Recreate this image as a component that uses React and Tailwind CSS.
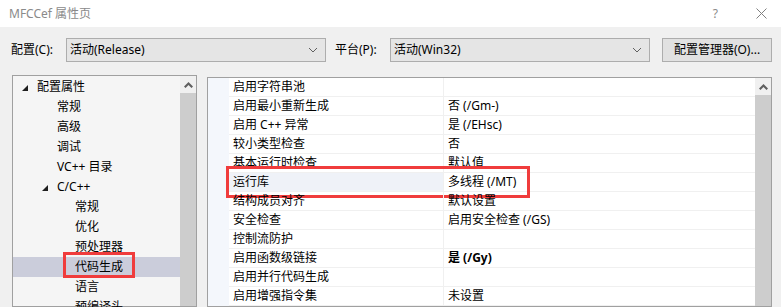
import React from "react";

const font = { fontFamily: "'Noto Sans', 'Noto Sans CJK SC', sans-serif" };

const tree = [
    { label: "配置属性", level: 0, open: true },
    { label: "常规", level: 1 },
    { label: "高级", level: 1 },
    { label: "调试", level: 1 },
    { label: "VC++ 目录", level: 1 },
    { label: "C/C++", level: 1, open: true },
    { label: "常规", level: 2 },
    { label: "优化", level: 2 },
    { label: "预处理器", level: 2 },
    { label: "代码生成", level: 2, selected: true },
    { label: "语言", level: 2 },
    { label: "预编译头", level: 2 },
];

const props = [
    ["启用字符串池", ""],
    ["启用最小重新生成", "否 (/Gm-)"],
    ["启用 C++ 异常", "是 (/EHsc)"],
    ["较小类型检查", "否"],
    ["基本运行时检查", "默认值"],
    ["运行库", "多线程 (/MT)", "hl"],
    ["结构成员对齐", "默认设置"],
    ["安全检查", "启用安全检查 (/GS)"],
    ["控制流防护", ""],
    ["启用函数级链接", "是 (/Gy)", "bold"],
    ["启用并行代码生成", ""],
    ["启用增强指令集", "未设置"],
];

const textPad = { 0: "pl-[24px]", 1: "pl-[44px]", 2: "pl-[62px]" };
const triPad = { 0: "left-[9px]", 1: "left-[29px]" };

const Chevron = () => (
    <svg width="10" height="6" viewBox="0 0 10 6" className="shrink-0">
        <polyline points="1,1 5,5 9,1" fill="none" stroke="#606060" strokeWidth="1" />
    </svg>
);

const UpArrow = () => (
    <svg width="9" height="6" viewBox="0 0 9 6">
        <polygon points="4.5,0 9,4.5 7.5,6 4.5,3 1.5,6 0,4.5" fill="#606060" />
    </svg>
);

const Combo = ({ text, width }) => (
    <div className={`h-[24px] ${width} bg-[#e5e5e5] border border-[#adadad] flex items-center justify-between pl-[3px] pr-[7px]`}>
        <span className="text-[12px] leading-none text-black">{text}</span>
        <Chevron />
    </div>
);

const Scrollbar = ({ top }) => (
    <div className="w-[16px] shrink-0 flex flex-col bg-[#f0f0f0]">
        <div className={`${top} flex items-center justify-center shrink-0`}>
            <UpArrow />
        </div>
        <div className="flex-1 bg-[#cdcdcd]" />
    </div>
);

export default function App() {
    return (
        <div className="w-[781px] h-[307px] overflow-hidden bg-[#f0f0f0] flex flex-col" style={font}>
            {/* Title bar */}
            <div className="h-[27px] bg-white flex items-center justify-between shrink-0">
                <span className="pl-[9px] text-[12px] text-[#8a8a8a] leading-none">MFCCef 属性页</span>
                <div className="flex items-center">
                    <span className="text-[12px] text-[#8a8a8a] leading-none mr-[38px]">?</span>
                    <svg width="11" height="11" viewBox="0 0 11 11" className="mr-[14px]">
                        <path d="M0.5 0.5 L10.5 10.5 M10.5 0.5 L0.5 10.5" stroke="#808080" strokeWidth="1" />
                    </svg>
                </div>
            </div>

            {/* Config row */}
            <div className="flex items-center mt-[11px] h-[24px] shrink-0 text-[12px] text-black">
                <span className="pl-[11px] w-[66px] leading-none">配置(C):</span>
                <Combo text="活动(Release)" width="w-[260px]" />
                <span className="pl-[9px] w-[64px] leading-none">平台(P):</span>
                <Combo text="活动(Win32)" width="w-[260px]" />
                <button className="ml-[12px] w-[110px] h-[24px] bg-[#e1e1e1] border border-[#adadad] text-[12px] leading-none">
                    配置管理器(O)...
                </button>
            </div>

            {/* Panels */}
            <div className="flex flex-1 mt-[13px] min-h-0 text-[12px] text-black">
                {/* Tree */}
                <div className="ml-[12px] w-[185px] border border-[#a0a0a0] bg-[#f5f5f5] flex">
                    <div className="flex-1 pt-[1px]">
                        {tree.map((item, i) => (
                            <div
                                key={i}
                                className={`relative h-[20px] flex items-center ${textPad[item.level]} ${item.selected ? "bg-[#cbcddb]" : ""}`}
                            >
                                {item.open && (
                                    <svg width="6" height="6" viewBox="0 0 6 6" className={`absolute top-[8px] ${triPad[item.level]}`}>
                                        <polygon points="6,0 6,6 0,6" fill="#1e1e1e" />
                                    </svg>
                                )}
                                <span className="leading-none whitespace-nowrap">{item.label}</span>
                                {item.selected && (
                                    <div className="absolute left-[50px] top-[-5px] w-[72px] h-[26px] border-[3px] border-[#f03c3c]" />
                                )}
                            </div>
                        ))}
                    </div>
                    <Scrollbar top="h-[17px]" />
                </div>

                {/* Property grid */}
                <div className="ml-[10px] mt-[2px] w-[565px] border border-[#a0a0a0] bg-white flex">
                    <div className="flex-1 flex">
                        <div className="w-[21px] bg-[#f4f7fc] shrink-0" />
                        <div className="flex-1">
                            {props.map(([name, value, kind], i) => (
                                <div key={i} className="relative h-[19px] flex border-b border-[#f0f0f0]">
                                    <div className={`w-[214px] flex items-center pl-[4px] ${kind === "hl" ? "bg-[#eff2f8]" : ""}`}>
                                        <span className="leading-none whitespace-nowrap">{name}</span>
                                    </div>
                                    <div className="flex-1 flex items-center pl-[4px] border-l border-[#f0f0f0]">
                                        <span className={`leading-none whitespace-nowrap ${kind === "bold" ? "font-bold" : ""}`}>{value}</span>
                                    </div>
                                    {kind === "hl" && (
                                        <div className="absolute left-[-3px] top-[-7px] w-[304px] h-[32px] border-[3px] border-[#f03c3c]" />
                                    )}
                                </div>
                            ))}
                        </div>
                    </div>
                    <Scrollbar top="h-[17px]" />
                </div>
            </div>
        </div>
    );
}
